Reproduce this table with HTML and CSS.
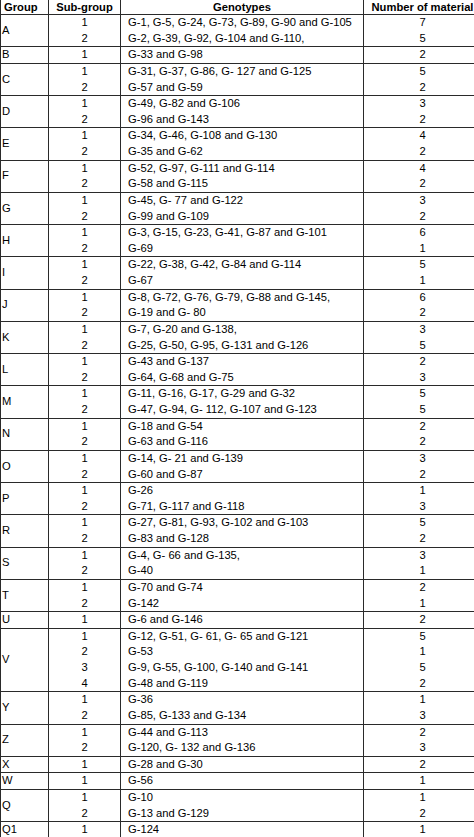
FILE: index.html
```html
<!DOCTYPE html>
<html lang="en">
<head>
<meta charset="utf-8">
<title>Groups and genotypes</title>
<link rel="stylesheet" href="styles.css">
</head>
<body>
<table class="tbl">
<colgroup><col class="c1"><col class="c2"><col class="c3"><col class="c4"></colgroup>
<thead>
<tr><th class="hg">Group</th><th>Sub-group</th><th>Genotypes</th><th>Number of material</th></tr>
</thead>
<tbody>
<tr class="first"><td class="g" rowspan="2">A</td><td class="s">1</td><td class="t">G-1, G-5, G-24, G-73, G-89, G-90 and G-105</td><td class="n">7</td></tr>
<tr><td class="s">2</td><td class="t">G-2, G-39, G-92, G-104 and G-110,</td><td class="n">5</td></tr>
<tr class="first"><td class="g">B</td><td class="s">1</td><td class="t">G-33 and G-98</td><td class="n">2</td></tr>
<tr class="first"><td class="g" rowspan="2">C</td><td class="s">1</td><td class="t">G-31, G-37, G-86, G- 127 and G-125</td><td class="n">5</td></tr>
<tr><td class="s">2</td><td class="t">G-57 and G-59</td><td class="n">2</td></tr>
<tr class="first"><td class="g" rowspan="2">D</td><td class="s">1</td><td class="t">G-49, G-82 and G-106</td><td class="n">3</td></tr>
<tr><td class="s">2</td><td class="t">G-96 and G-143</td><td class="n">2</td></tr>
<tr class="first"><td class="g" rowspan="2">E</td><td class="s">1</td><td class="t">G-34, G-46, G-108 and G-130</td><td class="n">4</td></tr>
<tr><td class="s">2</td><td class="t">G-35 and G-62</td><td class="n">2</td></tr>
<tr class="first"><td class="g" rowspan="2">F</td><td class="s">1</td><td class="t">G-52, G-97, G-111 and G-114</td><td class="n">4</td></tr>
<tr><td class="s">2</td><td class="t">G-58 and G-115</td><td class="n">2</td></tr>
<tr class="first"><td class="g" rowspan="2">G</td><td class="s">1</td><td class="t">G-45, G- 77 and G-122</td><td class="n">3</td></tr>
<tr><td class="s">2</td><td class="t">G-99 and G-109</td><td class="n">2</td></tr>
<tr class="first"><td class="g" rowspan="2">H</td><td class="s">1</td><td class="t">G-3, G-15, G-23, G-41, G-87 and G-101</td><td class="n">6</td></tr>
<tr><td class="s">2</td><td class="t">G-69</td><td class="n">1</td></tr>
<tr class="first"><td class="g" rowspan="2">I</td><td class="s">1</td><td class="t">G-22, G-38, G-42, G-84 and G-114</td><td class="n">5</td></tr>
<tr><td class="s">2</td><td class="t">G-67</td><td class="n">1</td></tr>
<tr class="first"><td class="g" rowspan="2">J</td><td class="s">1</td><td class="t">G-8, G-72, G-76, G-79, G-88 and G-145,</td><td class="n">6</td></tr>
<tr><td class="s">2</td><td class="t">G-19 and G- 80</td><td class="n">2</td></tr>
<tr class="first"><td class="g" rowspan="2">K</td><td class="s">1</td><td class="t">G-7, G-20 and G-138,</td><td class="n">3</td></tr>
<tr><td class="s">2</td><td class="t">G-25, G-50, G-95, G-131 and G-126</td><td class="n">5</td></tr>
<tr class="first"><td class="g" rowspan="2">L</td><td class="s">1</td><td class="t">G-43 and G-137</td><td class="n">2</td></tr>
<tr><td class="s">2</td><td class="t">G-64, G-68 and G-75</td><td class="n">3</td></tr>
<tr class="first"><td class="g" rowspan="2">M</td><td class="s">1</td><td class="t">G-11, G-16, G-17, G-29 and G-32</td><td class="n">5</td></tr>
<tr><td class="s">2</td><td class="t">G-47, G-94, G- 112, G-107 and G-123</td><td class="n">5</td></tr>
<tr class="first"><td class="g" rowspan="2">N</td><td class="s">1</td><td class="t">G-18 and G-54</td><td class="n">2</td></tr>
<tr><td class="s">2</td><td class="t">G-63 and G-116</td><td class="n">2</td></tr>
<tr class="first"><td class="g" rowspan="2">O</td><td class="s">1</td><td class="t">G-14, G- 21 and G-139</td><td class="n">3</td></tr>
<tr><td class="s">2</td><td class="t">G-60 and G-87</td><td class="n">2</td></tr>
<tr class="first"><td class="g" rowspan="2">P</td><td class="s">1</td><td class="t">G-26</td><td class="n">1</td></tr>
<tr><td class="s">2</td><td class="t">G-71, G-117 and G-118</td><td class="n">3</td></tr>
<tr class="first"><td class="g" rowspan="2">R</td><td class="s">1</td><td class="t">G-27, G-81, G-93, G-102 and G-103</td><td class="n">5</td></tr>
<tr><td class="s">2</td><td class="t">G-83 and G-128</td><td class="n">2</td></tr>
<tr class="first"><td class="g" rowspan="2">S</td><td class="s">1</td><td class="t">G-4, G- 66 and G-135,</td><td class="n">3</td></tr>
<tr><td class="s">2</td><td class="t">G-40</td><td class="n">1</td></tr>
<tr class="first"><td class="g" rowspan="2">T</td><td class="s">1</td><td class="t">G-70 and G-74</td><td class="n">2</td></tr>
<tr><td class="s">2</td><td class="t">G-142</td><td class="n">1</td></tr>
<tr class="first"><td class="g">U</td><td class="s">1</td><td class="t">G-6 and G-146</td><td class="n">2</td></tr>
<tr class="first"><td class="g" rowspan="4">V</td><td class="s">1</td><td class="t">G-12, G-51, G- 61, G- 65 and G-121</td><td class="n">5</td></tr>
<tr><td class="s">2</td><td class="t">G-53</td><td class="n">1</td></tr>
<tr><td class="s">3</td><td class="t">G-9, G-55, G-100, G-140 and G-141</td><td class="n">5</td></tr>
<tr><td class="s">4</td><td class="t">G-48 and G-119</td><td class="n">2</td></tr>
<tr class="first"><td class="g" rowspan="2">Y</td><td class="s">1</td><td class="t">G-36</td><td class="n">1</td></tr>
<tr><td class="s">2</td><td class="t">G-85, G-133 and G-134</td><td class="n">3</td></tr>
<tr class="first"><td class="g" rowspan="2">Z</td><td class="s">1</td><td class="t">G-44 and G-113</td><td class="n">2</td></tr>
<tr><td class="s">2</td><td class="t">G-120, G- 132 and G-136</td><td class="n">3</td></tr>
<tr class="first"><td class="g">X</td><td class="s">1</td><td class="t">G-28 and G-30</td><td class="n">2</td></tr>
<tr class="first"><td class="g">W</td><td class="s">1</td><td class="t">G-56</td><td class="n">1</td></tr>
<tr class="first"><td class="g" rowspan="2">Q</td><td class="s">1</td><td class="t">G-10</td><td class="n">1</td></tr>
<tr><td class="s">2</td><td class="t">G-13 and G-129</td><td class="n">2</td></tr>
<tr class="first"><td class="g">Q1</td><td class="s">1</td><td class="t">G-124</td><td class="n">1</td></tr>
</tbody>
</table>
</body>
</html>
```
FILE: styles.css
```css
html, body {
  margin: 0;
  padding: 0;
  overflow: hidden;
  background: #ffffff;
}

.tbl {
  table-layout: fixed;
  width: 481px;
  border-collapse: separate;
  border-spacing: 0;
  font-family: "Liberation Sans", Arial, sans-serif;
  font-size: 11.2px;
  color: #000000;
}

.c1 { width: 48px; }
.c2 { width: 72px; }
.c3 { width: 243px; }
.c4 { width: 118px; }

.tbl th {
  font-weight: bold;
  line-height: 14px;
  padding: 0;
  text-align: center;
  white-space: nowrap;
  border-left: 1px solid #2a2a2a;
}

.tbl th.hg {
  text-align: left;
  padding-left: 3px;
}

.tbl td {
  padding: 0;
  line-height: 15.62px;
  white-space: nowrap;
  border-left: 1px solid #2a2a2a;
  vertical-align: middle;
}

.tbl tr.first td {
  border-top: 1px solid #2a2a2a;
}

.g {
  text-align: left;
  padding-left: 1px !important;
}

.s { text-align: center; }

.t {
  text-align: left;
  padding-left: 7px !important;
}

.n { text-align: center; }
```
